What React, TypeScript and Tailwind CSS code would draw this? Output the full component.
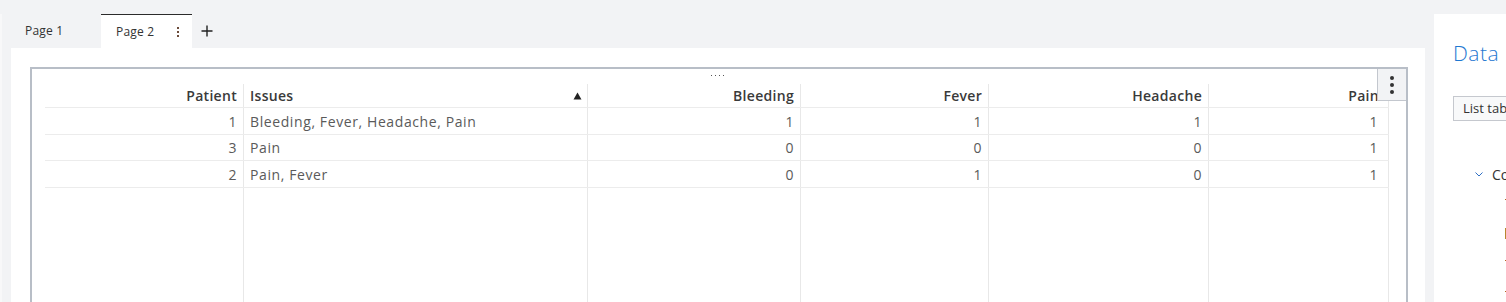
import React from "react";

const cols = [
  { w: 199, align: "right" },
  { w: 344, align: "left" },
  { w: 213, align: "right" },
  { w: 188, align: "right" },
  { w: 220, align: "right" },
  { w: 180, align: "right" },
];

const rows: string[][] = [
  ["1", "Bleeding, Fever, Headache, Pain", "1", "1", "1", "1"],
  ["3", "Pain", "0", "0", "0", "1"],
  ["2", "Pain, Fever", "0", "1", "0", "1"],
];

const rowH = ["h-[27px]", "h-[26px]", "h-[27px]"];

export default function App() {
  return (
    <div className="w-[1506px] h-[302px] bg-[#f2f3f5] flex overflow-hidden font-['Open_Sans',sans-serif]">
      {/* left strip */}
      <div className="w-[2px] mt-[14px] bg-[#f8f8f9]" />
      {/* left column */}
      <div className="w-[1423px] flex flex-col">
        {/* tab bar */}
        <div className="h-[48px] flex items-end pl-[9px] shrink-0">
          <div className="w-[90px] h-[34px] flex items-center pl-[14px] text-[12px] text-[#333] tracking-[0.2px]">
            Page 1
          </div>
          <div className="w-[91px] h-[34px] bg-white border-t border-[#2b2b2b] flex items-center pl-[15px] text-[12px] text-[#333] tracking-[0.2px]">
            <span>Page 2</span>
            <div className="ml-[23px] flex flex-col gap-[2px] mt-[1px]">
              <span className="w-[2px] h-[2px] bg-[#6b4b3a]" />
              <span className="w-[2px] h-[2px] bg-[#6b4b3a]" />
              <span className="w-[2px] h-[2px] bg-[#6b4b3a]" />
            </div>
          </div>
          <div className="h-[34px] flex items-center pl-[9px]">
            <svg width="12" height="12" viewBox="0 0 12 12">
              <path d="M6 0.5V11.5M0.5 6H11.5" stroke="#222" strokeWidth="1.4" />
            </svg>
          </div>
        </div>
        {/* content panel */}
        <div className="flex-1 ml-[9px] bg-white pt-[19px] pl-[19px] pr-[17px] flex flex-col min-h-0">
          <div className="relative flex-1 border-2 border-[#b8bec7] border-b-0 flex flex-col pt-[15px] pl-[13px] min-h-0">
            {/* drag handle */}
            <div className="absolute top-[6px] left-[679px] flex gap-[3px]">
              <span className="w-[1px] h-[1px] bg-[#555]" />
              <span className="w-[1px] h-[1px] bg-[#555]" />
              <span className="w-[1px] h-[1px] bg-[#555]" />
              <span className="w-[1px] h-[1px] bg-[#555]" />
            </div>
            {/* kebab button */}
            <div className="absolute top-0 right-0 w-[29px] h-[32px] bg-[#f2f3f5] border-l border-b border-[#c3c7ce] flex flex-col items-center justify-center gap-[3px] z-10">
              <span className="w-[4px] h-[4px] rounded-full bg-[#333]" />
              <span className="w-[4px] h-[4px] rounded-full bg-[#333]" />
              <span className="w-[4px] h-[4px] rounded-full bg-[#333]" />
            </div>
            {/* header */}
            <div className="flex h-[24px] border-b border-[#ececec] w-[1344px] shrink-0">
              {["Patient", "Issues", "Bleeding", "Fever", "Headache", "Pain"].map((h, i) => (
                <div
                  key={h}
                  style={{ width: cols[i].w }}
                  className={`h-full border-r border-[#e8e8e8] flex items-center pl-[6px] text-[14px] font-semibold text-[#3a3a3a] tracking-[0.3px] ${
                    i === 5 ? "pr-[9px]" : "pr-[6px]"
                  } ${cols[i].align === "right" ? "justify-end" : "justify-between"}`}
                >
                  <span>{h}</span>
                  {i === 1 && (
                    <svg width="9" height="8" viewBox="0 0 9 8" className="mr-[-1px]">
                      <path d="M4.5 0.5L8.5 7.5H0.5Z" fill="#222" />
                    </svg>
                  )}
                </div>
              ))}
            </div>
            {rows.map((r, ri) => (
              <div key={ri} className={`flex ${rowH[ri]} border-b border-[#ececec] w-[1344px] shrink-0`}>
                {r.map((c, ci) => (
                  <div
                    key={ci}
                    style={{ width: cols[ci].w }}
                    className={`h-full border-r border-[#e8e8e8] flex items-center pl-[6px] text-[14px] text-[#5a5a5a] tracking-[0.6px] ${
                      ci === 5 ? "pr-[10px]" : "pr-[6px]"
                    } ${cols[ci].align === "right" ? "justify-end" : "justify-start"}`}
                  >
                    {c}
                  </div>
                ))}
              </div>
            ))}
            {/* filler */}
            <div className="flex flex-1 w-[1344px]">
              {cols.map((c, i) => (
                <div key={i} style={{ width: c.w }} className="h-full border-r border-[#e8e8e8]" />
              ))}
            </div>
          </div>
        </div>
      </div>
      {/* gap */}
      <div className="w-[9px]" />
      {/* right panel */}
      <div className="flex-1 mt-[14px] bg-white pl-[19px] overflow-hidden min-w-0">
        <div className="pt-[25px] text-[21px] font-light text-[#1f78d1] leading-[28px] tracking-[0.5px] whitespace-nowrap">
          Data
        </div>
        <div className="mt-[29px] h-[25px] w-[200px] border border-[#c5c8ce] bg-[#f8f9fa] flex items-center pl-[9px] text-[13px] text-[#333] whitespace-nowrap">
          List table
        </div>
        <div className="mt-[45px] flex items-center pl-[22px] h-[16px] whitespace-nowrap w-[200px]">
          <svg width="8" height="5" viewBox="0 0 8 5" className="shrink-0">
            <path d="M0.5 0.5L4 4L7.5 0.5" stroke="#2f6fc4" strokeWidth="1" fill="none" />
          </svg>
          <span className="ml-[9px] text-[14px] text-[#333] shrink-0">Columns</span>
        </div>
        <div className="pl-[52px] mt-[17px] flex flex-col">
          <span className="w-[2px] h-[1px] bg-[#b5651d]" />
          <span className="mt-[28px] w-[2px] h-[11px] bg-[#b8862f]" />
          <span className="mt-[21px] w-[2px] h-[1px] bg-[#b5651d]" />
          <span className="mt-[30px] w-[2px] h-[1px] bg-[#b5651d]" />
        </div>
      </div>
    </div>
  );
}
